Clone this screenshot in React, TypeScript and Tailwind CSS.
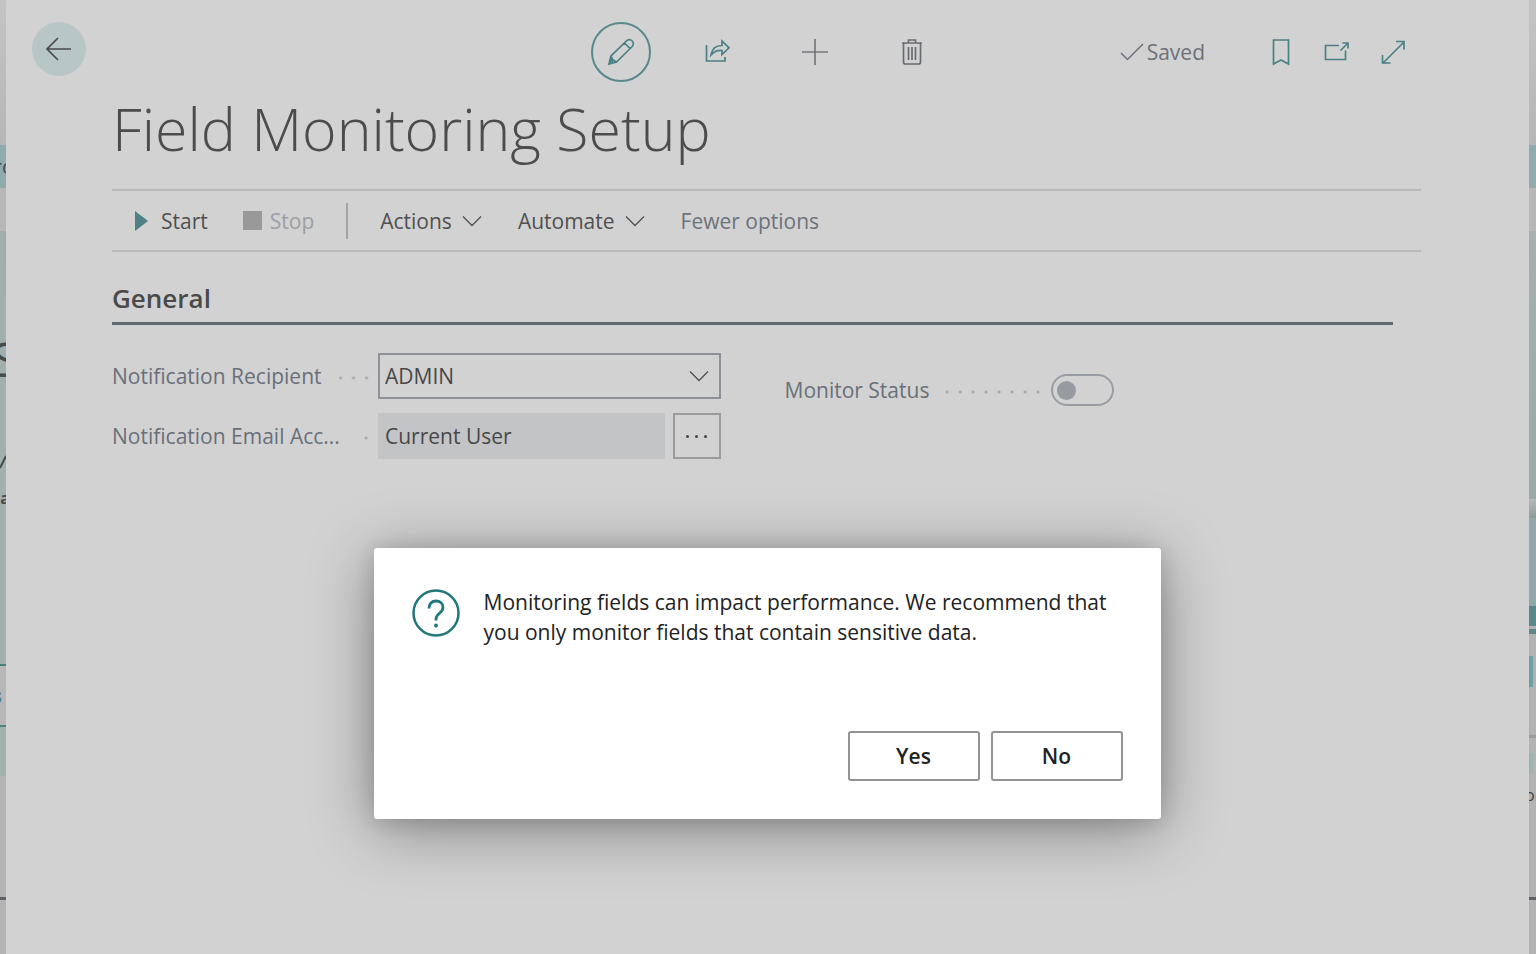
import { useState } from "react";
import type { ReactNode } from "react";

function Icon({ children }: { children: ReactNode }) {
  return (
    <svg
      width="28"
      height="28"
      viewBox="0 0 28 28"
      aria-hidden="true"
      fill="none"
      stroke="currentColor"
      strokeWidth="1.7"
    >
      {children}
    </svg>
  );
}

function Chevron() {
  return (
    <svg
      width="20"
      height="12"
      viewBox="0 0 20 12"
      aria-hidden="true"
      fill="none"
      stroke="currentColor"
      strokeWidth="1.3"
    >
      <path d="M1 1.5 10 10.5 19 1.5" />
    </svg>
  );
}

function FieldLabel({ id, children }: { id: string; children: ReactNode }) {
  return (
    <label
      htmlFor={id}
      className="mr-2 flex w-[258px] shrink-0 items-center whitespace-nowrap text-[#69707a]"
    >
      {children}
      <span className="mt-1 ml-4 h-1 flex-1 bg-[radial-gradient(circle_at_9px_2px,#a6a9ac_1px,transparent_2px)] bg-[length:13px_4px] bg-right bg-repeat-x" />
    </label>
  );
}

function LeftEdge() {
  return (
    <div
      aria-hidden="true"
      className="flex w-[6px] shrink-0 flex-col overflow-hidden bg-[#b3b3b3] text-[#4a4a4a]"
    >
      <div className="h-[145px] bg-linear-to-b from-[#c4c4c4] to-[#b6b6b6]" />
      <div className="flex h-[43px] items-center justify-end bg-[#8fabae] text-xl">
        <span className="-mr-2">ro</span>
      </div>
      <div className="h-[43px] bg-[#b8b6b6]" />
      <div className="flex h-[433px] flex-col items-end bg-linear-to-b from-[#a3adb1] via-[#a3afae] to-[#a3afae] pt-[96px]">
        <span className="-mr-3 text-5xl leading-[64px]">S</span>
        <svg width="6" height="16" viewBox="0 0 6 16" className="mt-[63px]">
          <path d="M0 14 6 2" stroke="currentColor" strokeWidth="2" />
        </svg>
        <span className="-mr-1 mt-4 text-base leading-6 font-bold">a</span>
      </div>
      <div className="flex h-[63px] items-center border-y-2 border-[#4f7d84] bg-[#b8b6b6] text-xl font-bold text-[#4f7d84]">
        <span className="-ml-2">s</span>
      </div>
      <div className="h-[49px] bg-[#a3b1af]" />
      <div className="h-[121px]" />
      <div className="h-[3px] bg-[#5c6268]" />
    </div>
  );
}

function RightEdge() {
  return (
    <div
      aria-hidden="true"
      className="flex w-[7px] shrink-0 flex-col overflow-hidden bg-[#b3b3b3] text-[#3f3f3f]"
    >
      <div className="h-[145px] bg-linear-to-b from-[#c4c4c4] to-[#b6b6b6]" />
      <div className="h-[43px] bg-[#8fabae]" />
      <div className="h-[43px] bg-[#b8b6b6]" />
      <div className="h-[268px] bg-linear-to-b from-[#a5b0b3] to-[#98aaaa]" />
      <div className="h-[19px] bg-linear-to-b from-[#b5baba] to-[#8d9b9b]" />
      <div className="h-[88px] bg-[#91a9a9]" />
      <div className="h-[20px] bg-[#5b898b]" />
      <div className="mt-[3px] h-[5px] bg-[#5b898b]" />
      <div className="mt-[22px] mr-[3px] h-[31px] bg-[#6fa0a6]" />
      <div className="mt-[48px] h-[3px] bg-[#9c9c9c]" />
      <div className="mt-[15px] mr-[3px] h-[20px] bg-[#9fb3b2]" />
      <div className="mt-[8px] flex h-[28px] items-center text-base">
        <span className="-ml-1">or</span>
      </div>
      <div className="mt-[88px] h-[3px] bg-[#5c6268]" />
    </div>
  );
}

function Header() {
  return (
    <header className="grid grid-cols-[1fr_auto_1fr] items-start px-[26px] pt-[22px]">
      <button
        type="button"
        aria-label="Back"
        className="flex size-[54px] items-center justify-center rounded-full bg-[#b8c6c7] text-[#4a4a4a]"
      >
        <Icon>
          <path d="M26 14H2M13 3 2 14l11 11" />
        </Icon>
      </button>

      <div className="flex gap-[37px] pr-[2px] text-[#4b8085]">
        <button
          type="button"
          aria-label="Edit"
          className="flex size-[60px] items-center justify-center rounded-full border-2 border-[#5a898d]"
        >
          <Icon>
            <path d="M2 26 4 18 19.5 2.8Q22.5.5 25.2 3 27.5 5.5 25.2 8.500L9.500 24ZM4 18l1.800 3.800L9.500 24M17.500 5l5.500 5.500M2.500 25.500l1.500-3.500 2 2.500Z" />
          </Icon>
        </button>
        <button
          type="button"
          aria-label="Share"
          className="flex size-[60px] items-center justify-center"
        >
          <Icon>
            <path d="M2.500 7v16h18.500v-4" />
            <path d="M7 17C8 10.500 12 7.500 18 7.500V3l7 6.800-7 6.700v-4C13.500 12 10 13.500 7 17Z" />
          </Icon>
        </button>
        <button
          type="button"
          aria-label="New"
          className="flex size-[60px] items-center justify-center text-[#75787d]"
        >
          <Icon>
            <path d="M14 1v26M1 14h26" />
          </Icon>
        </button>
        <button
          type="button"
          aria-label="Delete"
          className="flex size-[60px] items-center justify-center text-[#696c72]"
        >
          <Icon>
            <path d="M4 5h20M10.500 5V2h7v3M5.500 5v19q0 2 2 2h13q2 0 2-2V5M10.500 9v13M14 9v13M17.500 9v13" />
          </Icon>
        </button>
      </div>

      <div className="flex h-[60px] items-center justify-end pr-24 text-[#4b8085]">
        <p className="mr-[62px] flex items-center gap-[3px] text-[#6d717a]">
          <svg
            width="24"
            height="18"
            viewBox="0 0 24 18"
            aria-hidden="true"
            fill="none"
            stroke="currentColor"
            strokeWidth="1.5"
          >
            <path d="M1 10 7.500 16.500 23 1" />
          </svg>
          Saved
        </p>
        <div className="flex gap-7">
          <button type="button" aria-label="Bookmark">
            <Icon>
              <path d="M6.500 2h15v24L14 22l-7.500 4Z" />
            </Icon>
          </button>
          <button type="button" aria-label="Open in new window">
            <Icon>
              <path d="M16 7.500H2.500v14h20v-9M17.500 12.500 25 5M19.500 5H25v5.500" />
            </Icon>
          </button>
          <button type="button" aria-label="Expand">
            <Icon>
              <path d="M4 25 25 4M17 3.500h8v8M3.500 17v8h8" />
            </Icon>
          </button>
        </div>
      </div>
    </header>
  );
}

function ActionBar() {
  return (
    <nav className="mt-[21px] flex h-[63px] items-center border-y-2 border-[#bababa] text-[#505050]">
      <button type="button" className="ml-[23px] flex items-center gap-3">
        <svg width="14" height="20" viewBox="0 0 14 20" aria-hidden="true">
          <path d="M0 0 13 10 0 20Z" fill="#4f8085" />
        </svg>
        Start
      </button>
      <button
        type="button"
        disabled
        className="ml-[35px] flex items-center gap-2 text-[#9c9fa4]"
      >
        <span className="size-[19px] bg-[#999]" />
        Stop
      </button>
      <span className="mx-8 h-9 w-[2px] bg-[#a0a3a8]" />
      <button type="button" className="flex items-center gap-[10px]">
        Actions
        <Chevron />
      </button>
      <button type="button" className="ml-9 flex items-center gap-[10px]">
        Automate
        <Chevron />
      </button>
      <button type="button" className="ml-9 text-[#6d727c]">
        Fewer options
      </button>
    </nav>
  );
}

function General() {
  const [monitoring, setMonitoring] = useState(false);

  return (
    <section className="mr-7">
      <h2 className="mt-[26px] border-b-[3px] border-[#626a70] pb-1 text-[26px] leading-10 font-semibold text-[#4a4a4a]">
        General
      </h2>

      <div className="mt-7 grid grid-cols-2 gap-16">
        <div className="flex flex-col gap-[14px]">
          <div className="flex h-[46px]">
            <FieldLabel id="recipient">Notification Recipient</FieldLabel>
            <div className="relative flex-1">
              <select
                id="recipient"
                className="h-full w-full appearance-none border-2 border-[#8d9197] px-[5px] text-[#484848]"
              >
                <option>ADMIN</option>
              </select>
              <span className="pointer-events-none absolute inset-y-0 right-3 flex items-center text-[#505050]">
                <Chevron />
              </span>
            </div>
          </div>
          <div className="flex h-[46px]">
            <FieldLabel id="account">Notification Email Acc...</FieldLabel>
            <input
              id="account"
              readOnly
              value="Current User"
              className="mr-2 min-w-0 flex-1 bg-[#c3c4c6] px-[7px] text-[#484848]"
            />
            <button
              type="button"
              aria-label="Choose account"
              className="flex w-12 items-center justify-center gap-[6px] border-2 border-[#9a9b9c]"
            >
              <span className="size-[3px] rounded-full bg-[#444]" />
              <span className="size-[3px] rounded-full bg-[#444]" />
              <span className="size-[3px] rounded-full bg-[#444]" />
            </button>
          </div>
        </div>

        <div className="flex h-[74px] items-center">
          <FieldLabel id="status">Monitor Status</FieldLabel>
          <input
            id="status"
            type="checkbox"
            role="switch"
            checked={monitoring}
            onChange={(e) => setMonitoring(e.target.checked)}
            className="flex h-8 w-[63px] appearance-none items-center rounded-full border-2 border-[#999da3] px-1 before:size-[19px] before:rounded-full before:bg-[#979ba0] checked:justify-end"
          />
        </div>
      </div>
    </section>
  );
}

function ConfirmDialog() {
  return (
    <div className="absolute inset-0 flex items-start justify-center pt-[548px] pr-[2px]">
      <div
        role="alertdialog"
        aria-modal="true"
        aria-describedby="confirm-text"
        className="w-full max-w-[787px] rounded-[3px] bg-white px-[38px] pt-[39px] pb-[38px] text-[#222] shadow-[0_10px_64px_rgba(0,0,0,0.38),0_2px_20px_rgba(0,0,0,0.14)]"
      >
        <div className="flex gap-6">
          <svg
            width="48"
            height="48"
            viewBox="0 0 48 48"
            aria-hidden="true"
            fill="none"
            stroke="#22777d"
            className="mt-[2px] shrink-0"
          >
            <circle cx="24" cy="24" r="22.500" strokeWidth="2.500" />
            <path
              d="M17 19.500C17 14.800 19.800 12 24 12s7 2.600 7 6.500c0 5.500-7 6-7 11.500v1.500"
              strokeWidth="2.800"
            />
            <circle cx="24" cy="36.500" r="2" fill="#22777d" stroke="none" />
          </svg>
          <p id="confirm-text" className="leading-[30px]">
            Monitoring fields can impact performance. We recommend that
            <br />
            you only monitor fields that contain sensitive data.
          </p>
        </div>
        <div className="mt-[84px] flex justify-end gap-[11px] font-semibold">
          <button
            type="button"
            className="h-[50px] w-[132px] rounded-[3px] border-2 border-[#939393]"
          >
            Yes
          </button>
          <button
            type="button"
            className="h-[50px] w-[132px] rounded-[3px] border-2 border-[#939393]"
          >
            No
          </button>
        </div>
      </div>
    </div>
  );
}

export default function App() {
  return (
    <div className="relative flex min-h-screen bg-[#b3b3b3] font-['Open_Sans','Noto_Sans',sans-serif] text-[21px] leading-[30px]">
      <LeftEdge />
      <main className="min-w-0 flex-1 bg-[#d2d2d2]">
        <Header />
        <div className="pr-[108px] pl-[106px]">
          <h1 className="mt-[6px] text-[59px] leading-[80px] font-light text-[#4c4c4c]">
            Field Monitoring Setup
          </h1>
          <ActionBar />
          <General />
        </div>
      </main>
      <RightEdge />
      <ConfirmDialog />
    </div>
  );
}
